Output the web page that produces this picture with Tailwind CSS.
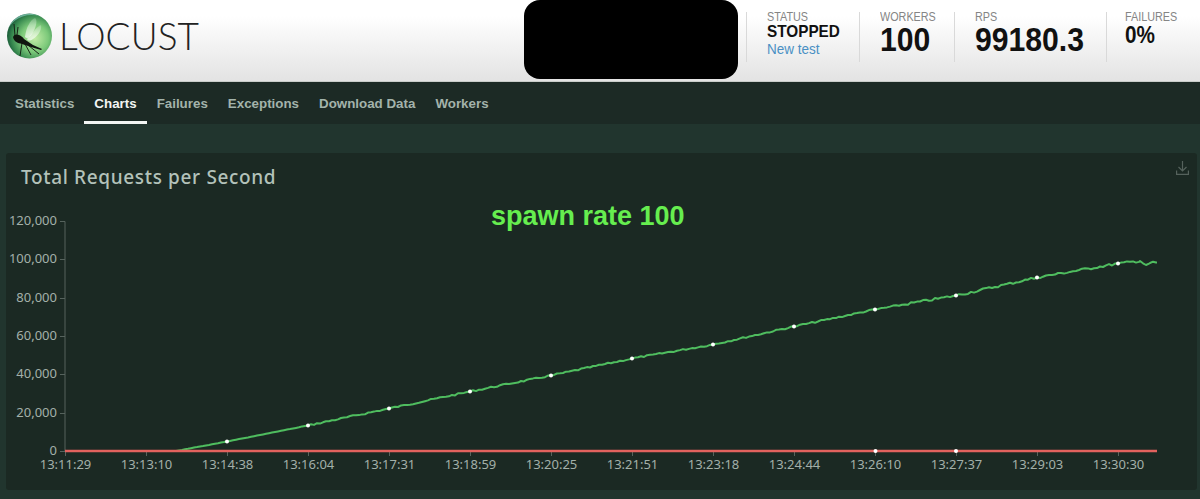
<!DOCTYPE html>
<html lang="en">
  <head>
    <meta charset="UTF-8" />
    <title>Locust</title>
    <script src="https://cdn.jsdelivr.net/npm/@tailwindcss/browser@4"></script>
  </head>
  <body class="bg-[#21352e] h-[499px] overflow-hidden font-['Liberation_Sans',sans-serif]">
    <!-- header -->
    <header class="h-[82px] flex justify-between bg-gradient-to-b from-white from-20% to-[#e3e3e3] border-b border-[#c9cdca]">
      <div class="flex items-center pl-[6px] pb-[9px] gap-[6px]">
        <svg width="47" height="46" viewBox="0 0 47 46">
          <defs>
            <radialGradient id="ball" cx="62%" cy="55%" r="60%">
              <stop offset="0" stop-color="#c2eca6" />
              <stop offset="0.5" stop-color="#7cc97a" />
              <stop offset="0.85" stop-color="#37894f" />
              <stop offset="1" stop-color="#20633d" />
            </radialGradient>
            <linearGradient id="wing" x1="0" y1="0" x2="0" y2="1">
              <stop offset="0" stop-color="#ffffff" stop-opacity="0.2" />
              <stop offset="1" stop-color="#ffffff" stop-opacity="0.7" />
            </linearGradient>
          </defs>
          <circle cx="23.5" cy="23" r="22.5" fill="url(#ball)" />
          <path d="M3 14 A22 22 0 0 1 34 3.5 A27 27 0 0 0 3 14Z" fill="#86c9ba" opacity="0.7" />
          <path d="M19 24 C20 15 24 7 29 5 C32 7 30 15 26 21 C23 25 21 26 19 24Z" fill="url(#wing)" />
          <path d="M21 26 C26 21 31 13 35 12 C36 17 32 23 27 26 C24 28 22 28 21 26Z" fill="url(#wing)" />
          <path d="M7 24 C8 21 11 21 13 22 C15 23 17 24 18 26 L27 32 L36 36 L35 37 L25 34 L16 31 C12 30 8 29 7 24Z" fill="#10160f" />
          <path d="M9 23 L8 11 M11 22 L12 14 M16 30 L14 43 M19 31 L25 42 M22 32 L33 41" stroke="#10160f" stroke-width="0.9" fill="none" />
        </svg>
        <span class="font-['Lato',sans-serif] font-light text-[37px] leading-none text-[#222] tracking-[0.1px] -mt-[2px]">LOCUST</span>
      </div>
      <div class="flex items-start">
        <div class="w-[214px] h-[79px] bg-black rounded-[16px] mr-[8px]"></div>
        <div class="flex mt-[12px] h-[50px]">
          <div class="w-[113px] border-l border-[#d9d9d9] pl-[20px]">
            <div class="text-[12px] leading-[11px] text-[#858585] origin-left scale-x-90">STATUS</div>
            <div class="text-[17px] leading-[17px] font-bold text-[#111] origin-left scale-x-90">STOPPED</div>
            <a href="#" class="block text-[15px] leading-[17px] text-[#4a90c4] origin-left scale-x-90">New test</a>
          </div>
          <div class="w-[95px] border-l border-[#d9d9d9] pl-[20px]">
            <div class="text-[12px] leading-[11px] text-[#858585] origin-left scale-x-90">WORKERS</div>
            <div class="text-[33.5px] leading-[34px] font-bold text-[#111] origin-left scale-x-90">100</div>
          </div>
          <div class="w-[152px] border-l border-[#d9d9d9] pl-[20px]">
            <div class="text-[12px] leading-[11px] text-[#858585] origin-left scale-x-90">RPS</div>
            <div class="text-[33.5px] leading-[34px] font-bold text-[#111] origin-left scale-x-90">99180.3</div>
          </div>
          <div class="w-[94px] border-l border-[#d9d9d9] pl-[18px]">
            <div class="text-[12px] leading-[11px] text-[#858585] origin-left scale-x-90">FAILURES</div>
            <div class="text-[23px] leading-[22px] font-bold text-[#111] mt-[1px] origin-left scale-x-90">0%</div>
          </div>
        </div>
      </div>
    </header>

    <!-- tabs -->
    <nav class="h-[42px] bg-[#1c2a25] flex pl-[5px] text-[13.35px] font-bold text-[#a3b3ab]">
      <a href="#" class="px-[10px] pt-[12px]">Statistics</a>
      <a href="#" class="px-[10px] pt-[12px] text-[#f2f5f3] border-b-[3px] border-[#f2f5f3]">Charts</a>
      <a href="#" class="px-[10px] pt-[12px]">Failures</a>
      <a href="#" class="px-[10px] pt-[12px]">Exceptions</a>
      <a href="#" class="px-[10px] pt-[12px]">Download Data</a>
      <a href="#" class="px-[10px] pt-[12px]">Workers</a>
    </nav>

    <!-- chart card -->
    <section class="relative ml-[6px] mr-[3px] mt-[29px] h-[337px] bg-[#1b2923] rounded-[3px] flex flex-col">
      <h2 class="h-[47px] pl-[15px] pt-[12px] text-[19px] leading-[24px] font-medium text-[#b3c2ba] font-['Noto_Sans',sans-serif] tracking-[0.65px]">Total Requests per Second</h2>
      <svg id="chart" width="1191" height="290" viewBox="6 200 1191 290" class="block font-['Noto_Sans',sans-serif]">
        <g id="axes" fill="#a3b0a9" font-size="13"></g>
        <path id="rps" fill="none" stroke="#4fbd5f" stroke-width="2" stroke-linejoin="round" />
        <path d="M65 451H1157" fill="none" stroke="#e2625e" stroke-width="2.5" />
        <g id="dots" fill="#fff"></g>
      </svg>
      <div class="absolute top-[48px] left-[485px] text-[27px] leading-[30px] font-bold text-[#66ee4f]">spawn rate 100</div>
      <svg class="absolute top-[8px] right-[8px]" width="13" height="14" viewBox="0 0 13 14" fill="none" stroke="#55625c" stroke-width="1.2">
        <path d="M6.5 0V10M2.5 6L6.5 10L10.5 6M0.6 9.5V13.4H12.4V9.5" />
      </svg>
    </section>

    <script>
      const NS = "http://www.w3.org/2000/svg";
      const axes = document.getElementById("axes");
      const dots = document.getElementById("dots");

      function add(parent, tag, attrs, text) {
        const el = document.createElementNS(NS, tag);
        for (const k in attrs) el.setAttribute(k, attrs[k]);
        if (text) el.textContent = text;
        parent.appendChild(el);
        return el;
      }

      // y axis
      const yLabels = ["0", "20,000", "40,000", "60,000", "80,000", "100,000", "120,000"];
      add(axes, "path", { d: "M65 221.5V451.5", stroke: "#56635d", fill: "none" });
      yLabels.forEach((label, i) => {
        const y = Math.round(451 - i * 38.33) + 0.5;
        add(axes, "path", { d: `M60 ${y}H65`, stroke: "#56635d", fill: "none" });
        add(axes, "text", { x: 57, y: y + 3.5, "text-anchor": "end" }, label);
      });

      // x axis
      const xLabels = ["13:11:29", "13:13:10", "13:14:38", "13:16:04", "13:17:31", "13:18:59", "13:20:25",
        "13:21:51", "13:23:18", "13:24:44", "13:26:10", "13:27:37", "13:29:03", "13:30:30"];
      xLabels.forEach((label, i) => {
        const x = 65.5 + i * 81;
        add(axes, "path", { d: `M${x} 451V456`, stroke: "#56635d", fill: "none" });
        add(axes, "text", { x: x, y: 469, "text-anchor": "middle" }, label);
      });

      // rps line, with a bit of fixed noise on top of the ramp
      const keys = [[176, 451], [227, 441.5], [308, 425.5], [389, 408.5], [470, 391.5], [551, 375.5], [632, 358.5],
        [713, 344.5], [794, 326.5], [875, 309.5], [956, 295.5], [1037, 277.5], [1118, 263.5], [1140, 261], [1146, 265], [1150, 263], [1157, 262.5]];
      let d = "M65 451H176";
      let seed = 7;
      for (let i = 1; i < keys.length; i++) {
        const [x0, y0] = keys[i - 1];
        const [x1, y1] = keys[i];
        for (let x = x0 + 3; x < x1; x += 3) {
          seed = (seed * 9301 + 49297) % 233280;
          const amp = x > 300 ? (x > 900 ? 2.4 : 1.6) : 0;
          const noise = (seed / 233280 - 0.5) * amp;
          d += `L${x} ${(y0 + ((y1 - y0) * (x - x0)) / (x1 - x0) + noise).toFixed(1)}`;
        }
        d += `L${x1} ${y1}`;
      }
      document.getElementById("rps").setAttribute("d", d);

      keys.slice(1, 13).forEach(([x, y]) => add(dots, "circle", { cx: x, cy: y, r: 2 }));
      add(dots, "circle", { cx: 875.5, cy: 451, r: 2 });
      add(dots, "circle", { cx: 956, cy: 451, r: 2 });
    </script>
  </body>
</html>
